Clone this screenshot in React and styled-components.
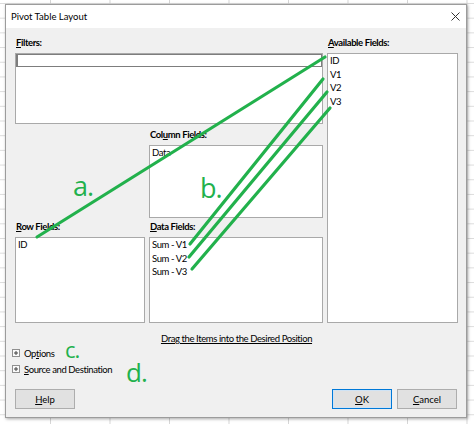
import React from 'react';
import styled, { createGlobalStyle } from 'styled-components';

const GREEN = '#22b14c';

const GlobalStyle = createGlobalStyle`
  html, body { margin: 0; padding: 0; }
  body {
    width: 474px;
    height: 424px;
    overflow: hidden;
    background-color: #ffffff;
    background-image:
      linear-gradient(to right, #d6d6d6 1px, transparent 1px),
      linear-gradient(to bottom, #dcdcdc 1px, transparent 1px);
    background-size: 59.5px 100%, 100% 14.7px;
    background-position: 50px 0, 0 3px;
    font-family: Lato, "Open Sans", sans-serif;
    color: #000;
  }
`;

const Sheet = styled.div`
  position: relative;
  box-sizing: border-box;
  width: 474px;
  height: 424px;
  padding: 4px 0 0 5px;
`;

const Dialog = styled.div`
  box-sizing: border-box;
  width: 462px;
  height: 414px;
  display: flex;
  flex-direction: column;
  border: 1px solid #9c9c9c;
  box-shadow: 1px 1px 3px rgba(0, 0, 0, 0.35);
  background: #f0f0f0;
`;

const TitleBar = styled.div`
  height: 23px;
  flex: none;
  display: flex;
  align-items: center;
  justify-content: space-between;
  padding: 0 6px 0 5px;
  background: #ffffff;
  font-size: 9.5px;
`;

const Body = styled.div`
  flex: 1;
  display: flex;
  flex-direction: column;
  padding: 9px 8px 0 9px;
  font-size: 9.5px;
  letter-spacing: -0.4px;
`;

const Layout = styled.div`
  display: grid;
  grid-template-columns: 130px 174px 131px;
  column-gap: 4px;
  grid-template-rows: 16px 71px 21px 73px 19px 86px;
  grid-template-areas:
    "fl fl al"
    "fb fb ab"
    ". cl ab"
    ". cb ab"
    "rl dl ab"
    "rb db ab";
`;

const Label = styled.div`
  grid-area: ${(p) => p.$area};
  align-self: end;
  margin: 0 0 4px 1px;
  line-height: 12px;
  font-weight: 700;
  white-space: nowrap;
`;

const FieldBox = styled.div`
  grid-area: ${(p) => p.$area};
  box-sizing: border-box;
  background: #ffffff;
  border: 1px solid #a9a9a9;
  padding: 0 2px;
  overflow: hidden;
`;

const FocusRow = styled.div`
  height: 11px;
  margin: 0 -2px;
  border: 1px solid #7d7d7d;
  border-left-width: 2px;
`;

const Item = styled.div`
  line-height: 13.7px;
  white-space: nowrap;
`;

const Hint = styled.div`
  margin-top: 10px;
  line-height: 12px;
  text-align: center;
  text-decoration: underline;
`;

const Expander = styled.div`
  height: 16px;
  display: flex;
  align-items: center;
  gap: 4px;
  margin-left: -3px;
`;

const Buttons = styled.div`
  margin-top: 12px;
  display: flex;
  justify-content: space-between;
  padding-right: 1px;
  letter-spacing: 0;
`;

const ButtonGroup = styled.div`
  display: flex;
  gap: 5px;
`;

const Button = styled.div`
  box-sizing: border-box;
  width: 60px;
  height: 20px;
  display: flex;
  align-items: center;
  justify-content: center;
  background: #e1e1e1;
  border: 1px solid ${(p) => (p.$default ? '#0078d7' : '#adadad')};
  box-shadow: ${(p) => (p.$default ? 'inset 0 0 0 1px #cfe3f5' : 'none')};
`;

const Key = styled.span`
  text-decoration: underline;
`;

const Marks = styled.svg`
  position: absolute;
  inset: 0;
  pointer-events: none;
`;

const Note = styled.span`
  position: absolute;
  left: ${(p) => p.$x}px;
  top: ${(p) => p.$y}px;
  font-family: "Open Sans", Lato, sans-serif;
  font-size: ${(p) => p.$size}px;
  line-height: 1;
  color: ${GREEN};
  letter-spacing: -1px;
  pointer-events: none;
`;

function CloseIcon() {
  return (
    <svg width="9" height="9" viewBox="0 0 9 9">
      <path d="M0.5 0.5 L8.5 8.5 M8.5 0.5 L0.5 8.5" stroke="#333" strokeWidth="1" />
    </svg>
  );
}

function PlusBox() {
  return (
    <svg width="8" height="8" viewBox="0 0 8 8">
      <rect x="0.5" y="0.5" width="7" height="7" fill="#fafafa" stroke="#8f8f8f" />
      <path d="M2 4 H6 M4 2 V6" stroke="#404040" strokeWidth="1" />
    </svg>
  );
}

const strokes = [
  [37, 237, 325, 57],
  [190, 244, 323, 79],
  [189, 257, 327, 92],
  [192, 269, 330, 108],
];

const notes = [
  { t: 'a.', x: 73, y: 172, s: 27 },
  { t: 'b.', x: 200, y: 174, s: 27 },
  { t: 'c.', x: 65, y: 338, s: 22 },
  { t: 'd.', x: 126, y: 359, s: 26 },
];

export default function App() {
  return (
    <>
      <GlobalStyle />
      <Sheet>
        <Dialog>
          <TitleBar>
            <span>Pivot Table Layout</span>
            <CloseIcon />
          </TitleBar>
          <Body>
            <Layout>
              <Label $area="fl"><Key>F</Key>ilters:</Label>
              <FieldBox $area="fb"><FocusRow /></FieldBox>

              <Label $area="al"><Key>A</Key>vailable Fields:</Label>
              <FieldBox $area="ab">
                {['ID', 'V1', 'V2', 'V3'].map((f) => <Item key={f}>{f}</Item>)}
              </FieldBox>

              <Label $area="cl">Col<Key>u</Key>mn Fields:</Label>
              <FieldBox $area="cb"><Item>Data</Item></FieldBox>

              <Label $area="rl"><Key>R</Key>ow Fields:</Label>
              <FieldBox $area="rb"><Item>ID</Item></FieldBox>

              <Label $area="dl"><Key>D</Key>ata Fields:</Label>
              <FieldBox $area="db">
                {['Sum - V1', 'Sum - V2', 'Sum - V3'].map((f) => <Item key={f}>{f}</Item>)}
              </FieldBox>
            </Layout>

            <Hint>Drag the Items into the Desired Position</Hint>

            <Expander><PlusBox /><span>Op<Key>t</Key>ions</span></Expander>
            <Expander><PlusBox /><span><Key>S</Key>ource and Destination</span></Expander>

            <Buttons>
              <Button><span><Key>H</Key>elp</span></Button>
              <ButtonGroup>
                <Button $default><span><Key>O</Key>K</span></Button>
                <Button><span><Key>C</Key>ancel</span></Button>
              </ButtonGroup>
            </Buttons>
          </Body>
        </Dialog>

        <Marks width="474" height="424" viewBox="0 0 474 424">
          {strokes.map(([x1, y1, x2, y2], i) => (
            <line key={i} x1={x1} y1={y1} x2={x2} y2={y2} stroke={GREEN} strokeWidth="3.2" strokeLinecap="round" />
          ))}
        </Marks>
        {notes.map((n) => (
          <Note key={n.t} $x={n.x} $y={n.y} $size={n.s}>{n.t}</Note>
        ))}
      </Sheet>
    </>
  );
}
